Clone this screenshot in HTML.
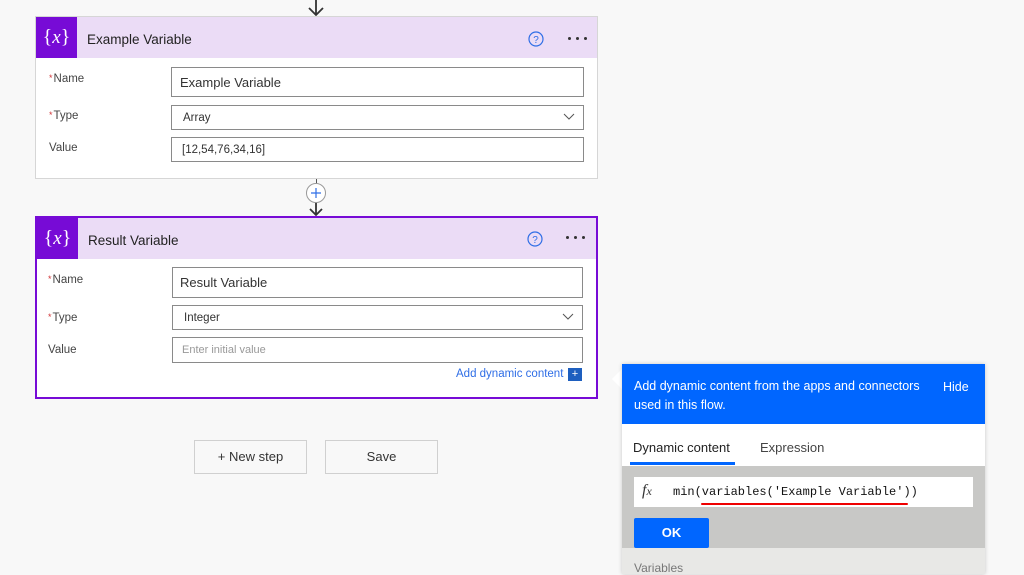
<!DOCTYPE html>
<html><head><style>
*{box-sizing:border-box;margin:0;padding:0}
body{width:1024px;height:574px;background:#f8f8f8;font-family:"Liberation Sans",sans-serif;position:relative;overflow:hidden;color:#333}
.a{position:absolute}
.card{position:absolute;background:#fff;border:1px solid #d6d6d6}
.hdr{position:absolute;left:0;right:0;top:0;height:41px;background:#ebdcf6}
.ic{position:absolute;left:0;top:0;width:41px;height:41px;background:#770bd6;color:#fff;font-family:"Liberation Serif",serif;font-size:20px;text-align:center;line-height:40px}
.ic i{font-size:19px}
.ttl{position:absolute;left:51px;top:15px;font-size:13.5px;color:#222}
.lbl{position:absolute;font-size:11.5px;color:#444}
.lbl b{color:#d13438;font-weight:normal;font-size:9px;vertical-align:top;margin-right:1px}
.inp{position:absolute;border:1px solid #8a8a8a;background:#fff;font-size:11.5px;color:#333;padding-left:11px;display:flex;align-items:center}
.btn{position:absolute;height:34px;border:1px solid #d0d0d0;background:#f8f8f8;font-size:13px;color:#333;text-align:center;line-height:32px}
.dots{position:absolute;top:19px;width:3px;height:3px;border-radius:50%;background:#333}
</style></head><body>
<svg class="a" style="left:306px;top:0" width="20" height="17"><path d="M10 0V14M3 8l7 7 7-7" stroke="#333" stroke-width="1.8" fill="none"/></svg>

<div class="card" style="left:35px;top:16px;width:563px;height:163px">
 <div class="hdr"><div class="ic">{<i>x</i>}</div><div class="ttl">Example Variable</div>
 <svg class="a" style="left:492px;top:14px" width="16" height="16"><circle cx="8" cy="8" r="7" stroke="#2f6ee6" stroke-width="1.2" fill="none"/><text x="8" y="12" font-size="10" fill="#2f6ee6" text-anchor="middle" font-family="Liberation Sans">?</text></svg>
 <div class="dots" style="left:532px;top:20px"></div><div class="dots" style="left:540px;top:20px"></div><div class="dots" style="left:548px;top:20px"></div></div>
 <div class="lbl" style="left:13px;top:56px"><b>*</b>Name</div>
 <div class="inp" style="left:135px;top:50px;width:413px;height:30px;font-size:13px;padding-left:8px">Example Variable</div>
 <div class="lbl" style="left:13px;top:93px"><b>*</b>Type</div>
 <div class="inp" style="left:135px;top:88px;width:413px;height:25px">Array<svg class="a" style="right:8px;top:7px" width="12" height="8"><path d="M1 1l5 5 5-5" stroke="#555" fill="none"/></svg></div>
 <div class="lbl" style="left:13px;top:125px">Value</div>
 <div class="inp" style="left:135px;top:120px;width:413px;height:25px;padding-left:10px">[12,54,76,34,16]</div>
</div>

<div class="a" style="left:316px;top:179px;width:1px;height:6px;background:#555"></div>
<svg class="a" style="left:305px;top:182px" width="22" height="34"><circle cx="11" cy="11" r="9.5" fill="#fff" stroke="#999"/><path d="M11 6v10M6 11h10" stroke="#2f6ee6" stroke-width="1.2"/><path d="M11 21v12M5 27l6 6 6-6" stroke="#333" stroke-width="1.8" fill="none"/></svg>

<div class="card" style="left:35px;top:216px;width:563px;height:183px;border:2px solid #770bd6">
 <div class="hdr"><div class="ic">{<i>x</i>}</div><div class="ttl" style="left:51px">Result Variable</div>
 <svg class="a" style="left:490px;top:13px" width="16" height="16"><circle cx="8" cy="8" r="7" stroke="#2f6ee6" stroke-width="1.2" fill="none"/><text x="8" y="12" font-size="10" fill="#2f6ee6" text-anchor="middle" font-family="Liberation Sans">?</text></svg>
 <div class="dots" style="left:529px;top:18px"></div><div class="dots" style="left:537px;top:18px"></div><div class="dots" style="left:545px;top:18px"></div></div>
 <div class="lbl" style="left:11px;top:56px"><b>*</b>Name</div>
 <div class="inp" style="left:135px;top:49px;width:411px;height:31px;font-size:13px;padding-left:7px">Result Variable</div>
 <div class="lbl" style="left:11px;top:94px"><b>*</b>Type</div>
 <div class="inp" style="left:135px;top:87px;width:411px;height:25px">Integer<svg class="a" style="right:8px;top:7px" width="12" height="8"><path d="M1 1l5 5 5-5" stroke="#555" fill="none"/></svg></div>
 <div class="lbl" style="left:11px;top:126px">Value</div>
 <div class="inp" style="left:135px;top:119px;width:411px;height:26px;color:#999;font-size:11px;padding-left:9px">Enter initial value</div>
 <div class="a" style="left:419px;top:150px;font-size:11.5px;color:#2f6ee6">Add dynamic content</div>
 <div class="a" style="left:531px;top:150px;width:14px;height:13px;background:#1e5fbf;color:#fff;font-size:11px;line-height:12px;text-align:center">+</div>
</div>

<div class="btn" style="left:194px;top:440px;width:113px">+ New step</div>
<div class="btn" style="left:325px;top:440px;width:113px">Save</div>

<svg class="a" style="left:611px;top:368px" width="13" height="22"><path d="M12 0L1 11l11 11z" fill="#fff"/></svg>
<div class="a" style="left:622px;top:364px;width:363px;height:210px;background:#fff;box-shadow:0 0 4px rgba(0,0,0,.2)">
 <div class="a" style="left:0;top:0;width:363px;height:60px;background:#0066ff;color:#fff;font-size:12.5px;line-height:19px;padding:13px 12px">Add dynamic content from the apps and connectors<br>used in this flow.</div>
 <div class="a" style="left:321px;top:16px;color:#fff;font-size:12.5px">Hide</div>
 <div class="a" style="left:11px;top:76px;font-size:13px;color:#222">Dynamic content</div>
 <div class="a" style="left:138px;top:76px;font-size:13px;color:#444">Expression</div>
 <div class="a" style="left:8px;top:98px;width:105px;height:3px;background:#0066ff"></div>
 <div class="a" style="left:0;top:102px;width:363px;height:82px;background:#c8c8c6"></div>
 <div class="a" style="left:12px;top:113px;width:339px;height:30px;background:#fff"></div>
 <div class="a" style="left:20px;top:118px;font-family:'Liberation Serif',serif;font-style:italic;font-size:16px;color:#333">f<span style="font-size:12px">x</span></div>
 <div class="a" style="left:51px;top:121px;font-family:'Liberation Mono',monospace;font-size:12px;color:#111">min(variables('Example Variable'))</div>
 <div class="a" style="left:79px;top:139px;width:207px;height:2px;background:#e00;border-radius:1px"></div>
 <div class="a" style="left:12px;top:154px;width:75px;height:30px;background:#0066ff;color:#fff;font-weight:bold;font-size:13px;text-align:center;line-height:30px;border-radius:2px">OK</div>
 <div class="a" style="left:0;top:184px;width:363px;height:26px;background:#e8e8e6"></div>
 <div class="a" style="left:12px;top:197px;font-size:12px;color:#777">Variables</div>
</div>
</body></html>
